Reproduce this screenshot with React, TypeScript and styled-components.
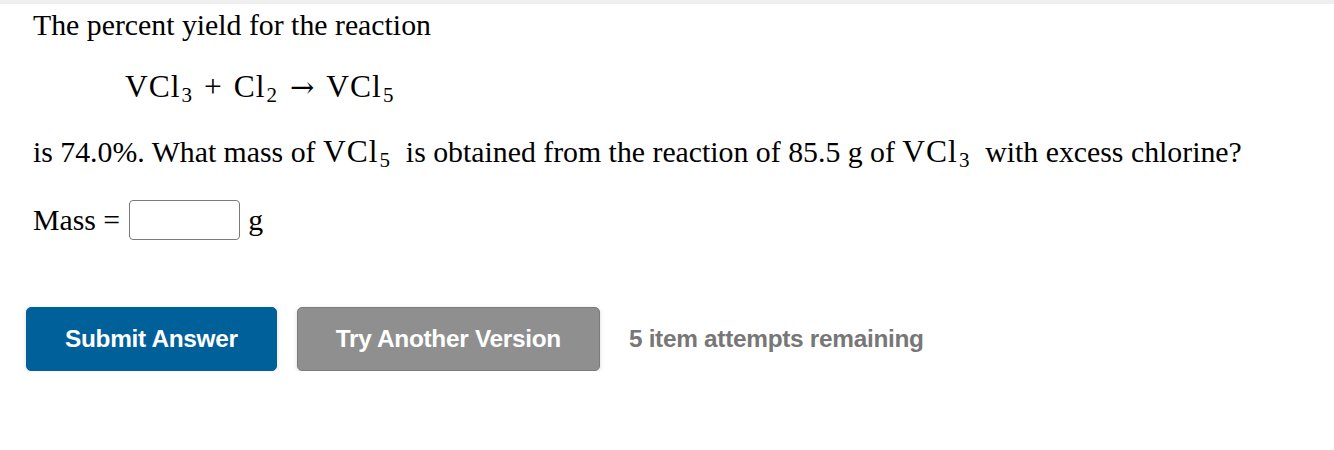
import React from 'react';
import styled, { createGlobalStyle } from 'styled-components';

const GlobalStyle = createGlobalStyle`
  html, body {
    margin: 0;
    padding: 0;
    background: #fff;
  }
`;

const TopBar = styled.div`
  height: 4px;
  background: #efefef;
`;

const Page = styled.div`
  padding: 5px 0 0 33px;
  font-family: 'Liberation Serif', 'Times New Roman', serif;
  font-size: 29.8px;
  color: #000;
`;

const Para = styled.p<{ $top?: number }>`
  margin: ${(p) => p.$top ?? 0}px 0 0;
  line-height: 32px;
`;

const Equation = styled.div`
  margin: 26px 0 0 92px;
  line-height: 40px;
  white-space: nowrap;
`;

const MathText = styled.span`
  font-family: 'Liberation Serif', 'Times New Roman', serif;
  font-size: 31.5px;
  letter-spacing: 1px;
`;

const Sub = styled.sub`
  font-size: 21px;
  vertical-align: -5px;
  line-height: 0;
  margin-left: 1px;
`;

const Op = styled.span`
  margin: 0 11px;
`;

const Arrow = styled.span`
  font-family: 'DejaVu Serif', serif;
  font-size: 29px;
  margin: 0 12px;
`;

const AnswerRow = styled.div`
  margin-top: 32px;
  display: flex;
  align-items: center;
`;

const Label = styled.span`
  margin-right: 9px;
`;

const Input = styled.input`
  width: 111px;
  height: 40px;
  box-sizing: border-box;
  border: 1.5px solid #7a7a7a;
  border-radius: 4px;
  margin: 0 8px 0 0;
  padding: 0;
  background: #fff;
`;

const Actions = styled.div`
  margin: 67px 0 0 -7px;
  display: flex;
  align-items: center;
  gap: 20px;
  font-family: 'Liberation Sans', Arial, sans-serif;
`;

const Button = styled.button<{ $variant: 'primary' | 'secondary' }>`
  height: 64px;
  padding: 0 38px;
  border-radius: 5px;
  font-family: 'Liberation Sans', Arial, sans-serif;
  font-weight: bold;
  font-size: 24.4px;
  letter-spacing: -0.3px;
  color: #fff;
  cursor: pointer;
  border: 1px solid ${(p) => (p.$variant === 'primary' ? '#00619a' : '#7b7b7b')};
  background: ${(p) => (p.$variant === 'primary' ? '#00619a' : '#8f8f8f')};
  box-shadow: 0 1px 4px rgba(0, 0, 0, 0.15);
`;

const Attempts = styled.span`
  margin-left: 9px;
  font-weight: bold;
  font-size: 24.4px;
  letter-spacing: -0.3px;
  color: #777;
`;

const Chem = ({ parts }: { parts: [string, string?][] }) => (
  <MathText>
    {parts.map(([base, sub], i) => (
      <React.Fragment key={i}>
        {base}
        {sub && <Sub>{sub}</Sub>}
      </React.Fragment>
    ))}
  </MathText>
);

export default function App() {
  return (
    <>
      <GlobalStyle />
      <TopBar />
      <Page>
        <Para>The percent yield for the reaction</Para>
        <Equation>
          <Chem parts={[['VCl', '3']]} />
          <MathText>
            <Op>+</Op>
          </MathText>
          <Chem parts={[['Cl', '2']]} />
          <Arrow>→</Arrow>
          <Chem parts={[['VCl', '5']]} />
        </Equation>
        <Para $top={29}>
          is 74.0%. What mass of <Chem parts={[['VCl', '5']]} />&nbsp; is obtained from the reaction of 85.5 g
          of <Chem parts={[['VCl', '3']]} />&nbsp; with excess chlorine?
        </Para>
        <AnswerRow>
          <Label>Mass =</Label>
          <Input type="text" aria-label="Mass" />
          <span>g</span>
        </AnswerRow>
        <Actions>
          <Button $variant="primary">Submit Answer</Button>
          <Button $variant="secondary">Try Another Version</Button>
          <Attempts>5 item attempts remaining</Attempts>
        </Actions>
      </Page>
    </>
  );
}
